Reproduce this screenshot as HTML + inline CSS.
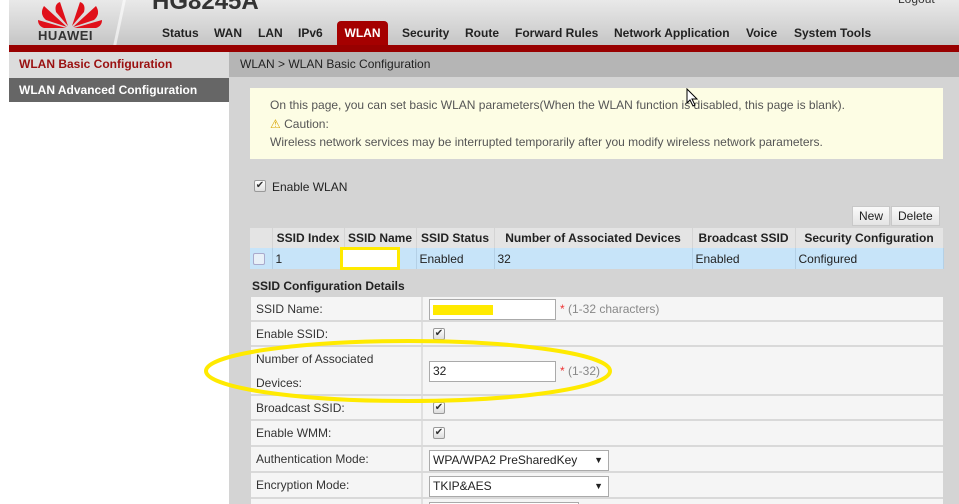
<!DOCTYPE html>
<html><head><meta charset="utf-8"><style>
*{margin:0;padding:0;box-sizing:border-box}
html,body{width:959px;height:504px;overflow:hidden}
body{background:#fff;font-family:"Liberation Sans",Arial,sans-serif;font-size:12px;color:#222;position:relative}
.a{position:absolute}
.hdr{left:9px;top:0;width:950px;height:46px;background:linear-gradient(#e9e9e9,#d0d0d0 70%,#c4c4c4)}
.red{left:9px;top:45px;width:950px;height:7px;background:#980000}
.menu{top:26px;font-weight:bold;font-size:12px;color:#222}
.tab{left:337px;top:21px;width:51px;height:25px;background:#a50000;border-radius:4px 4px 0 0;color:#fff;font-weight:bold;font-size:12px;text-align:center;padding-top:5px}
.side1{left:9px;top:52px;width:220px;height:26px;background:#dcdcdc;color:#9a1010;font-weight:bold;padding:5px 10px;font-size:12px}
.side2{left:9px;top:78px;width:220px;height:24px;background:#666;color:#fff;font-weight:bold;padding:5px 10px;font-size:12px}
.crumb{left:229px;top:52px;width:730px;height:25px;background:#b5b5b5;padding:5px 11px;font-size:12px;color:#222}
.content{left:229px;top:77px;width:730px;height:427px;background:#d4d4d4}
.note{left:250px;top:88px;width:693px;height:71px;background:#fdfde4;color:#555;padding:8px 20px;line-height:18.5px;font-size:12px}
.btn{top:206px;height:20px;background:linear-gradient(#fafafa,#e4e4e4);border:1px solid #c8c8c8;color:#222;padding:2px 6px;font-size:12px}
table{border-collapse:collapse;table-layout:fixed}
.t1{left:250px;top:228px;width:693px}
.t1 th{background:#e4e4e4;font-weight:bold;height:20px;font-size:12px;border-right:1px solid #d4d4d4;padding:0 2px;text-align:center;white-space:nowrap;overflow:hidden}
.t1 td{background:#c7e4f9;height:21px;border-right:1px solid #b4d0e6;padding:0 3px;text-align:left;white-space:nowrap}
.rows{left:251px;top:297px;width:692px}
.row{position:absolute;left:0;width:692px;background:#f5f5f5;border-bottom:2px solid #d9d9d9}
.row .l{position:absolute;left:0;top:0;width:172px;height:100%;border-right:2px solid #e0e0e0;padding:5px 5px;color:#333}
.inp{position:absolute;background:#fff;border:1px solid #aaa;height:21px;padding:2px 3px;font-size:12px}
.cb{position:absolute;width:12px;height:12px;border:1px solid #999;border-radius:2px;background:linear-gradient(#fff,#ddd);font-size:10px;line-height:10px;text-align:center;color:#333}
.hint{position:absolute;color:#888}
.hint b{color:#e33;font-weight:normal}
</style></head><body>
<div class="a hdr"></div>
<svg class="a" style="left:30px;top:0" width="80" height="30" viewBox="0 0 80 30">
<g fill="#e0101a"><path d="M38 26 L30 2 Q24 4 26 12Z"/><path d="M42 26 L50 2 Q56 4 54 12Z"/><path d="M37 27 L14 6 Q9 14 16 20Z"/><path d="M43 27 L66 6 Q71 14 64 20Z"/><path d="M36 28 L8 20 Q8 26 14 28Z"/><path d="M44 28 L72 20 Q72 26 66 28Z"/></g></svg>
<div class="a" style="left:38px;top:28px;font-weight:bold;font-size:13px;color:#333;letter-spacing:0.5px">HUAWEI</div>
<div class="a" style="left:118px;top:0;width:3px;height:46px;background:rgba(255,255,255,.6);transform:skewX(-12deg)"></div>
<div class="a" style="left:152px;top:-12px;font-weight:bold;font-size:24px;color:#333">HG8245A</div>
<div class="a" style="left:898px;top:-8px;font-size:12px;color:#333">Logout</div>
<div class="a menu" style="left:162px">Status</div>
<div class="a menu" style="left:214px">WAN</div>
<div class="a menu" style="left:258px">LAN</div>
<div class="a menu" style="left:298px">IPv6</div>
<div class="a tab">WLAN</div>
<div class="a menu" style="left:402px">Security</div>
<div class="a menu" style="left:465px">Route</div>
<div class="a menu" style="left:515px">Forward Rules</div>
<div class="a menu" style="left:614px">Network Application</div>
<div class="a menu" style="left:746px">Voice</div>
<div class="a menu" style="left:794px">System Tools</div>
<div class="a red"></div>
<div class="a side1">WLAN Basic Configuration</div>
<div class="a side2">WLAN Advanced Configuration</div>
<div class="a crumb">WLAN &gt; WLAN Basic Configuration</div>
<div class="a content"></div>
<div class="a note">On this page, you can set basic WLAN parameters(When the WLAN function is disabled, this page is blank).<br><span style="color:#d9a400">&#9888;</span> Caution:<br>Wireless network services may be interrupted temporarily after you modify wireless network parameters.</div>
<div class="cb" style="left:254px;top:180px">&#10004;</div>
<div class="a" style="left:272px;top:180px;color:#222">Enable WLAN</div>
<div class="a btn" style="left:852px">New</div>
<div class="a btn" style="left:891px">Delete</div>
<table class="a t1"><colgroup><col style="width:22px"><col style="width:72px"><col style="width:72px"><col style="width:78px"><col style="width:198px"><col style="width:103px"><col style="width:148px"></colgroup>
<tr><th></th><th>SSID Index</th><th>SSID Name</th><th>SSID Status</th><th>Number of Associated Devices</th><th>Broadcast SSID</th><th>Security Configuration</th></tr>
<tr><td><div style="width:12px;height:12px;border:1px solid #aac;border-radius:2px;background:#e8f0f8"></div></td><td>1</td><td></td><td>Enabled</td><td>32</td><td>Enabled</td><td>Configured</td></tr></table>
<div class="a" style="left:340px;top:247px;width:60px;height:23px;border:3px solid #ffea00;background:#fff"></div>
<div class="a" style="left:252px;top:279px;font-weight:bold">SSID Configuration Details</div>
<div class="a rows">
<div class="row" style="top:0;height:25px"><div class="l">SSID Name:</div><div class="inp" style="left:178px;top:2px;width:127px"><span style="display:inline-block;width:60px;height:10px;background:#ffea00;vertical-align:middle"></span></div><div class="hint" style="left:309px;top:5px"><b>*</b> (1-32 characters)</div></div>
<div class="row" style="top:25px;height:25px"><div class="l">Enable SSID:</div><div class="cb" style="left:182px;top:6px">&#10004;</div></div>
<div class="row" style="top:50px;height:49px"><div class="l" style="line-height:24px;padding-top:0">Number of Associated Devices:</div><div class="inp" style="left:178px;top:14px;width:127px">32</div><div class="hint" style="left:309px;top:17px"><b>*</b> (1-32)</div></div>
<div class="row" style="top:99px;height:25px"><div class="l">Broadcast SSID:</div><div class="cb" style="left:182px;top:6px">&#10004;</div></div>
<div class="row" style="top:124px;height:26px"><div class="l">Enable WMM:</div><div class="cb" style="left:182px;top:6px">&#10004;</div></div>
<div class="row" style="top:150px;height:26px"><div class="l">Authentication Mode:</div><div class="inp" style="left:178px;top:3px;width:180px">WPA/WPA2 PreSharedKey<span style="position:absolute;right:5px;font-size:9px;top:4px">&#9660;</span></div></div>
<div class="row" style="top:176px;height:26px"><div class="l">Encryption Mode:</div><div class="inp" style="left:178px;top:3px;width:180px">TKIP&amp;AES<span style="position:absolute;right:5px;font-size:9px;top:4px">&#9660;</span></div></div>
<div class="row" style="top:202px;height:26px"><div class="l"></div><div class="inp" style="left:178px;top:3px;width:150px"></div></div>
</div>
<svg class="a" style="left:0;top:0" width="959" height="504"><ellipse cx="408" cy="371" rx="202" ry="30" fill="none" stroke="#ffea00" stroke-width="4"/></svg>
<svg class="a" style="left:686px;top:88px" width="14" height="20"><path d="M1 1 L1 15 L4 12 L7 18 L9 17 L6 11 L11 11Z" fill="#fff" stroke="#000"/></svg>
</body></html>
